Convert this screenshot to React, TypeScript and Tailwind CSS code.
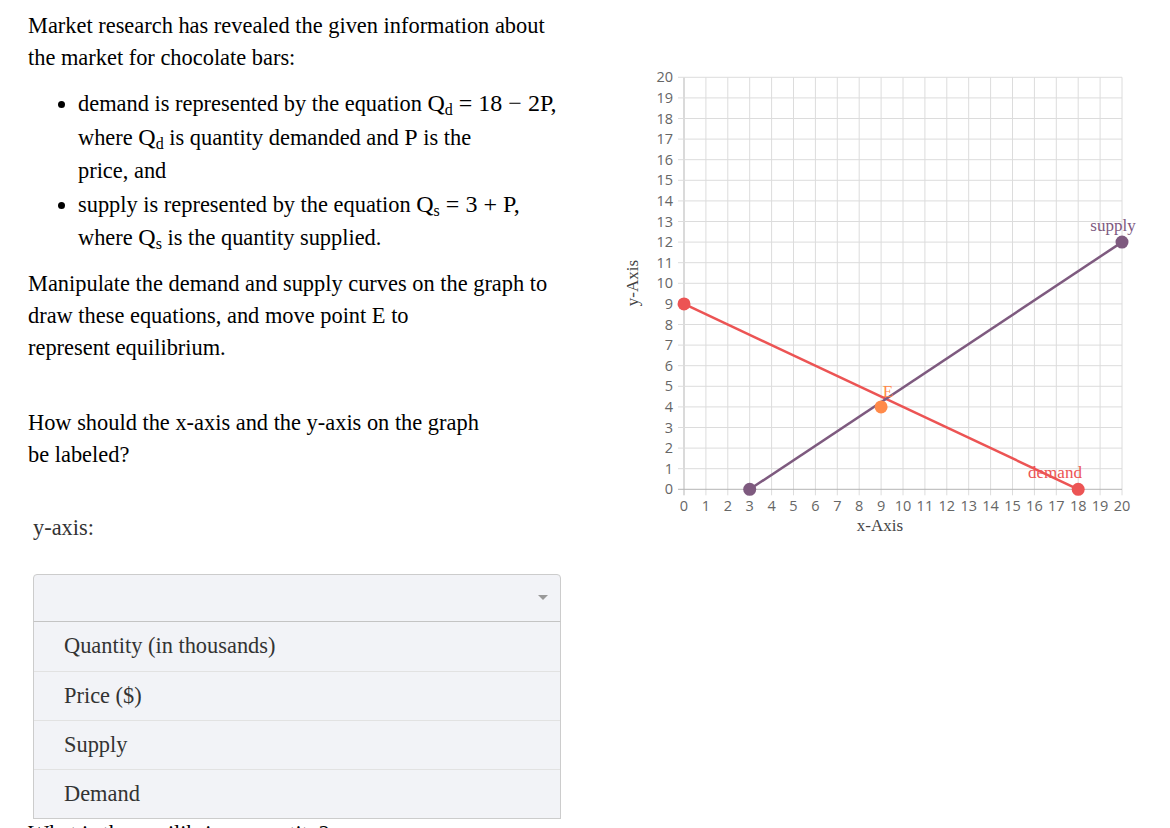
import React from "react";

const serif = { fontFamily: '"Liberation Serif", "Times New Roman", serif' };

// chart geometry (svg local px)
const X0 = 74;
const Y0 = 429.3;
const SX = 21.9;
const SY = 20.6;
const px = (v: number) => X0 + v * SX;
const py = (v: number) => Y0 - v * SY;
const ticks = Array.from({ length: 21 }, (_, i) => i);

function Q({ sub }: { sub: string }) {
  return (
    <span className="whitespace-nowrap text-[24px]">
      Q<sub className="text-[16px]">{sub}</sub>
    </span>
  );
}

function Op({ children }: { children: React.ReactNode }) {
  return <span className="mx-[6px] text-[24px]">{children}</span>;
}

function M({ children }: { children: React.ReactNode }) {
  return <span className="text-[24px]">{children}</span>;
}

function Chart() {
  return (
    <svg width={540} height={490} className="mt-[60px] shrink-0">
      {ticks.map((i) => (
        <line key={"v" + i} x1={px(i)} x2={px(i)} y1={py(20)} y2={py(0) + 6} stroke={i === 0 ? "#b5b5b5" : "#dcdcdc"} strokeWidth={1} />
      ))}
      {ticks.map((j) => (
        <line key={"h" + j} x1={px(0) - 6} x2={px(20)} y1={py(j)} y2={py(j)} stroke={j === 0 ? "#b5b5b5" : "#dcdcdc"} strokeWidth={1} />
      ))}
      {ticks.map((j) => (
        <text key={"yl" + j} x={63} y={py(j) + 5} textAnchor="end" fontSize={14.5} fill="#666" fontFamily='"Open Sans", sans-serif'>
          {j}
        </text>
      ))}
      {ticks.map((i) => (
        <text key={"xl" + i} x={px(i)} y={451} textAnchor="middle" fontSize={14.5} fill="#666" fontFamily='"Open Sans", sans-serif'>
          {i}
        </text>
      ))}
      <text x={270} y={471} textAnchor="middle" fontSize={17} fill="#444" style={serif}>
        x-Axis
      </text>
      <text transform="translate(28 223) rotate(-90)" textAnchor="middle" fontSize={17} fill="#444" style={serif}>
        y-Axis
      </text>

      {/* demand */}
      <line x1={px(0)} y1={py(9)} x2={px(18)} y2={py(0)} stroke="#ec5454" strokeWidth={2.5} />
      {/* supply */}
      <line x1={px(3)} y1={py(0)} x2={px(20)} y2={py(12)} stroke="#7e5a7f" strokeWidth={2.5} />

      <circle cx={px(0)} cy={py(9)} r={6.5} fill="#ec5454" />
      <circle cx={px(18)} cy={py(0)} r={6.5} fill="#ec5454" />
      <circle cx={px(3)} cy={py(0)} r={6.5} fill="#7e5a7f" />
      <circle cx={px(20)} cy={py(12)} r={6.5} fill="#7e5a7f" />
      <circle cx={px(9)} cy={py(4)} r={6.5} fill="#ff8a4a" />

      <text x={503} y={171} textAnchor="middle" fontSize={17} fill="#7e5a7f" style={serif}>
        supply
      </text>
      <text x={445} y={418} textAnchor="middle" fontSize={17} fill="#ec5454" style={serif}>
        demand
      </text>
      <text x={278} y={337} textAnchor="middle" fontSize={17} fill="#ff8a4a" style={serif}>
        E
      </text>
    </svg>
  );
}

function AxisSelect() {
  const options = ["Quantity (in thousands)", "Price ($)", "Supply", "Demand"];
  return (
    <div className="relative ml-[5px] w-[528px]">
      <div className="flex h-[48px] items-center justify-end rounded-t-[4px] border border-[#cccccc] bg-[#f2f3f7] pr-[12px]">
        <span className="h-0 w-0 border-x-[5px] border-t-[5px] border-x-transparent border-t-[#999999]" />
      </div>
      <ul className="absolute left-0 top-[47px] z-10 w-full border border-[#cccccc] border-t-[#c4c4c4] bg-[#f2f3f7]">
        {options.map((o, i) => (
          <li key={o} className={"flex h-[49px] items-center pl-[30px] text-[22.4px] text-[#333] " + (i > 0 ? "border-t border-[#e2e2e2]" : "")}>
            {o}
          </li>
        ))}
      </ul>
    </div>
  );
}

export default function App() {
  return (
    <div className="flex h-[828px] w-[1170px] overflow-hidden bg-white text-black" style={serif}>
      <div className="w-[560px] shrink-0 pl-[28px] pt-[10px] text-[22.4px] leading-[32px]">
        <p className="whitespace-nowrap">
          Market research has revealed the given information about
          <br />
          the market for chocolate bars:
        </p>
        <ul className="mt-[13px] list-disc pl-[50px] leading-[33.5px]">
          <li className="whitespace-nowrap">
            demand is represented by the equation <Q sub="d" />
            <Op>=</Op>
            <M>18</M>
            <Op>−</Op>
            <M>2P,</M>
            <br />
            where <Q sub="d" /> is quantity demanded and <M>P</M> is the
            <br />
            price, and
          </li>
          <li className="whitespace-nowrap">
            supply is represented by the equation <Q sub="s" />
            <Op>=</Op>
            <M>3</M>
            <Op>+</Op>
            <M>P,</M>
            <br />
            where <Q sub="s" /> is the quantity supplied.
          </li>
        </ul>
        <p className="mt-[13px] whitespace-nowrap">
          Manipulate the demand and supply curves on the graph to
          <br />
          draw these equations, and move point E to
          <br />
          represent equilibrium.
        </p>
        <p className="mt-[43px] whitespace-nowrap">
          How should the x-axis and the y-axis on the graph
          <br />
          be labeled?
        </p>
        <p className="mt-[41px] pl-[5px] text-[#333]">y-axis:</p>
        <div className="mt-[30px]">
          <AxisSelect />
        </div>
        {/* x-axis select sits under the open menu */}
        <div className="ml-[5px] mt-[105px] h-[48px] w-[528px] rounded-[4px] border border-[#aaaaaa] bg-[#f2f3f7]" />
        <p className="mt-[43px] whitespace-nowrap">What is the equilibrium quantity?</p>
      </div>
      <div className="ml-[50px]">
        <Chart />
      </div>
    </div>
  );
}
